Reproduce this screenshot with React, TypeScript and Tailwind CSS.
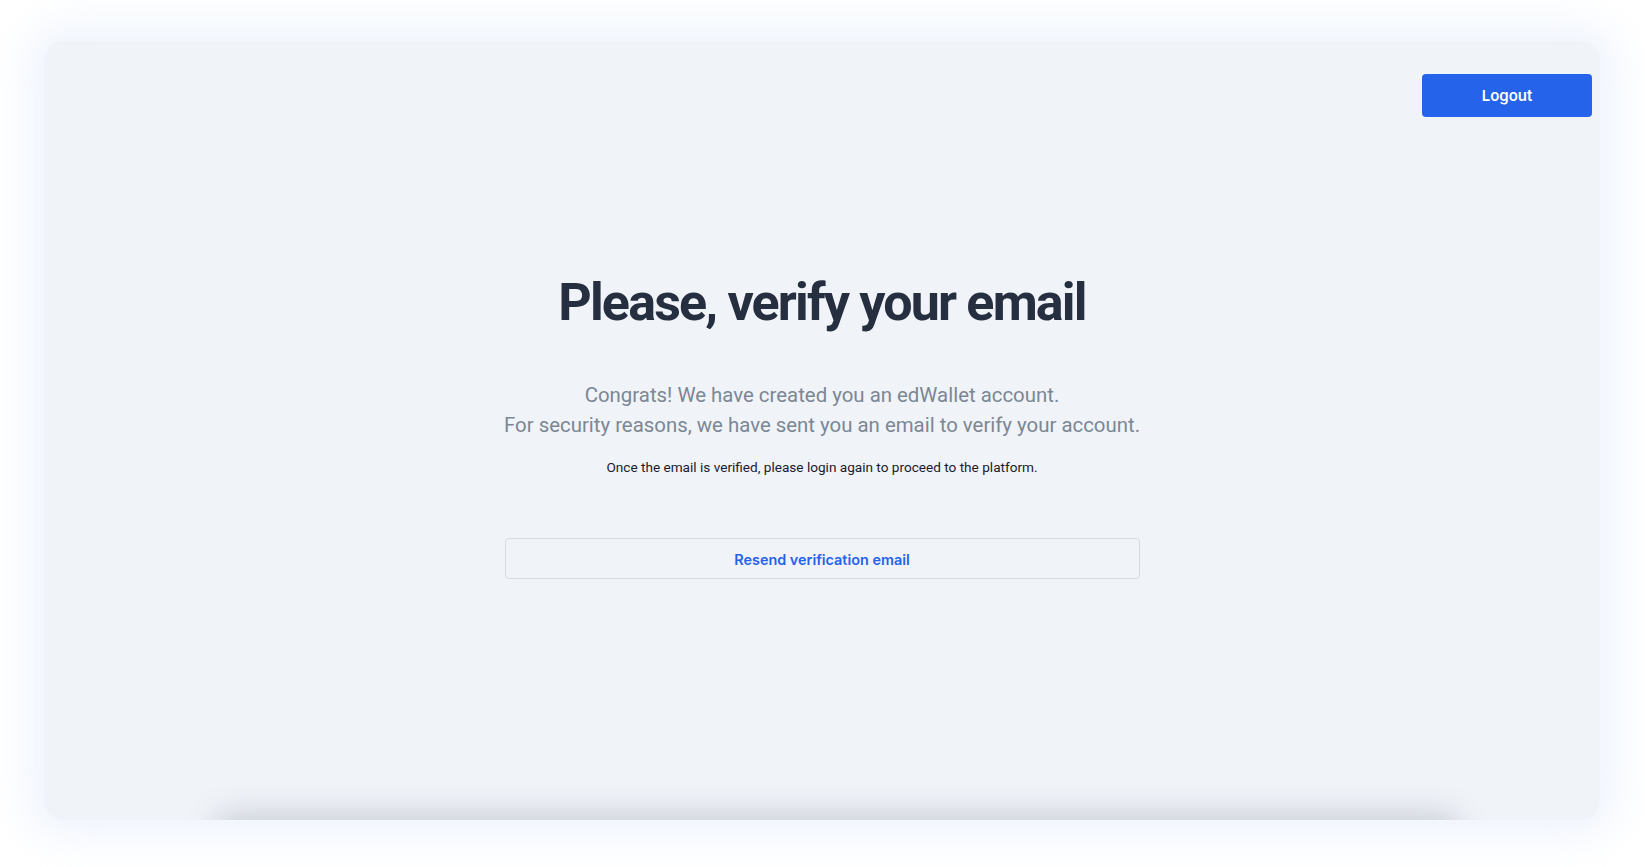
import React from 'react';

export default function App() {
  return (
    <div className="w-[1645px] h-[867px] bg-white pl-[44px] pt-[41px] font-['Roboto',sans-serif]">
      <div className="relative w-[1556px] h-[779px] rounded-[20px] bg-[#f0f3f8] overflow-hidden shadow-[0_0_40px_16px_rgba(220,230,250,0.45)]">
        {/* top bar */}
        <div className="flex justify-end pt-[33px] pr-[8px]">
          <button className="w-[170px] h-[43px] pt-[2px] rounded-[4px] bg-[#2563eb] text-white text-[15px] font-semibold font-['Inter',sans-serif]">
            Logout
          </button>
        </div>

        {/* main message */}
        <div className="flex flex-col items-center mt-[160px]">
          <h1 className="text-[52px] leading-[52px] font-bold tracking-[-0.035em] text-[#252f3f]">
            Please, verify your email
          </h1>
          <div className="mt-[51px] text-center text-[20.4px] leading-[30px] text-[#7b8794]">
            <p>Congrats! We have created you an edWallet account.</p>
            <p>For security reasons, we have sent you an email to verify your account.</p>
          </div>
          <p className="mt-[17px] text-[13.6px] leading-[20px] text-[#1a202c]">
            Once the email is verified, please login again to proceed to the platform.
          </p>
          <button className="mt-[61px] w-[635px] h-[41px] pt-[2px] rounded-[4px] border border-[#d5dbe3] text-[#2563eb] text-[14.4px] font-semibold font-['Inter',sans-serif]">
            Resend verification email
          </button>
        </div>

        {/* shadow cast from below, clipped by the card */}
        <div className="absolute left-[170px] right-[140px] -bottom-[40px] h-[40px] rounded-[30px] shadow-[0_-6px_30px_rgba(90,100,120,0.26)]" />
      </div>
    </div>
  );
}
